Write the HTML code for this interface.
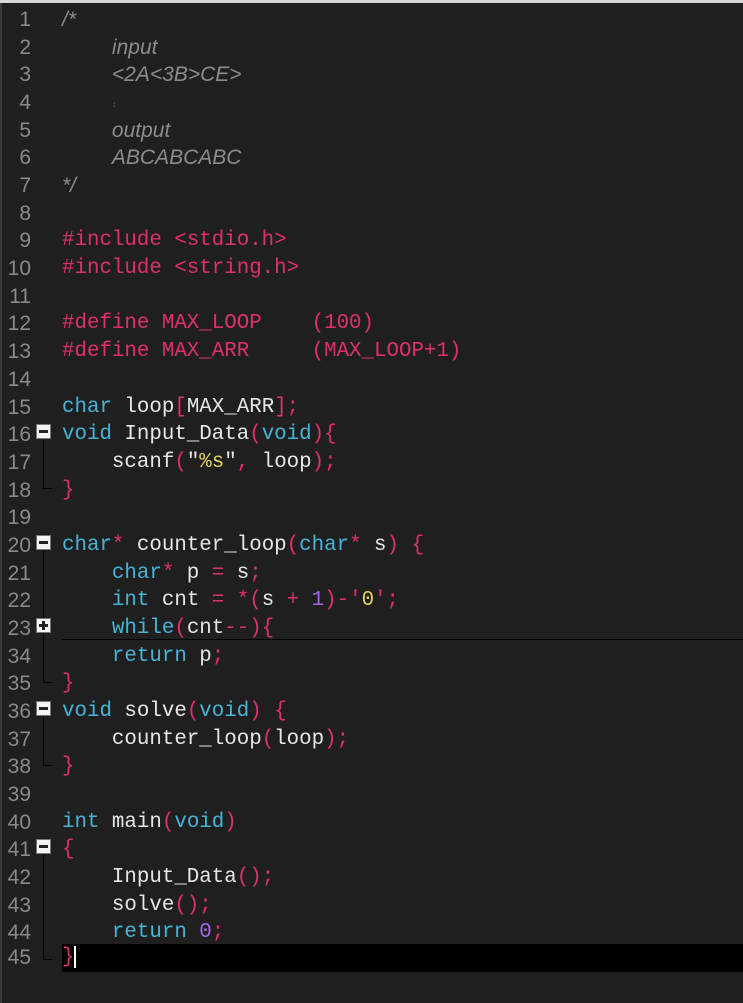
<!DOCTYPE html>
<html><head><meta charset="utf-8"><style>
html,body{margin:0;padding:0;}
body{width:743px;height:1003px;background:#1f1f1f;position:relative;overflow:hidden;font-family:"Liberation Mono",monospace;font-size:20.8px;}
.top{position:absolute;left:0;top:0;width:743px;height:3px;background:#d8d8d8;}
.lft{position:absolute;left:0;top:3px;width:2px;height:1000px;background:#3a3a3a;}
.r{position:absolute;left:0;width:743px;height:27.68px;line-height:27.68px;white-space:pre;}
.n,.c{top:3px;}
.n{position:absolute;left:0;width:31px;text-align:right;color:#8a8a8a;font-family:"Liberation Sans",sans-serif;font-size:21px;}
.c{position:absolute;left:62px;color:#e6e6e6;}
.k{color:#45b4d8}.p{color:#e0306a}.m{color:#a066f0}.y{color:#e2d25c}
.cm{color:#8c8c8c;font-family:"Liberation Sans",sans-serif;font-style:italic;font-size:21px;}
.box{position:absolute;left:36px;width:13px;height:13px;background:#f4f4f4;border:1px solid #777;}
.box:before{content:"";position:absolute;left:2px;right:2px;top:5px;height:3px;background:#222;}
.plus:after{content:"";position:absolute;top:2px;bottom:2px;left:5px;width:3px;background:#222;}
.vl{position:absolute;left:43px;width:1px;background:#000;}
.hl{position:absolute;left:43px;width:9px;height:1px;background:#000;}
</style></head><body>
<div class="top"></div><div class="lft"></div>
<div style="position:absolute;left:62px;top:944px;width:681px;height:28px;background:#000"></div>
<div style="position:absolute;left:62px;top:639px;width:681px;height:1px;background:#000"></div>

<div class="r" style="top:3px"><span class="n">1</span><span class="c"><span class="cm">/*</span></span></div>
<div class="r" style="top:30.68px"><span class="n">2</span><span class="c">    <span class="cm">input</span></span></div>
<div class="r" style="top:58.36px"><span class="n">3</span><span class="c">    <span class="cm">&lt;2A&lt;3B&gt;CE&gt;</span></span></div>
<div class="r" style="top:86.04px"><span class="n">4</span><span class="c">    <span class="p" style="font-size:8px">:</span></span></div>
<div class="r" style="top:113.72px"><span class="n">5</span><span class="c">    <span class="cm">output</span></span></div>
<div class="r" style="top:141.4px"><span class="n">6</span><span class="c">    <span class="cm">ABCABCABC</span></span></div>
<div class="r" style="top:169.08px"><span class="n">7</span><span class="c"><span class="cm">*/</span></span></div>
<div class="r" style="top:196.76px"><span class="n">8</span></div>
<div class="r" style="top:224.44px"><span class="n">9</span><span class="c p">#include &lt;stdio.h&gt;</span></div>
<div class="r" style="top:252.12px"><span class="n">10</span><span class="c p">#include &lt;string.h&gt;</span></div>
<div class="r" style="top:279.8px"><span class="n">11</span></div>
<div class="r" style="top:307.48px"><span class="n">12</span><span class="c p">#define MAX_LOOP    (100)</span></div>
<div class="r" style="top:335.16px"><span class="n">13</span><span class="c p">#define MAX_ARR     (MAX_LOOP+1)</span></div>
<div class="r" style="top:362.84px"><span class="n">14</span></div>
<div class="r" style="top:390.52px"><span class="n">15</span><span class="c"><span class="k">char</span> loop<span class="p">[</span>MAX_ARR<span class="p">];</span></span></div>
<div class="r" style="top:418.2px"><span class="n">16</span><span class="c"><span class="k">void</span> Input_Data<span class="p">(</span><span class="k">void</span><span class="p">){</span></span></div>
<div class="r" style="top:445.88px"><span class="n">17</span><span class="c">    scanf<span class="p">(</span>"<span class="y">%s</span>"<span class="p">,</span> loop<span class="p">);</span></span></div>
<div class="r" style="top:473.56px"><span class="n">18</span><span class="c p">}</span></div>
<div class="r" style="top:501.24px"><span class="n">19</span></div>
<div class="r" style="top:528.92px"><span class="n">20</span><span class="c"><span class="k">char</span><span class="p">*</span> counter_loop<span class="p">(</span><span class="k">char</span><span class="p">*</span> s<span class="p">)</span> <span class="p">{</span></span></div>
<div class="r" style="top:556.6px"><span class="n">21</span><span class="c">    <span class="k">char</span><span class="p">*</span> p <span class="p">=</span> s<span class="p">;</span></span></div>
<div class="r" style="top:584.28px"><span class="n">22</span><span class="c">    <span class="k">int</span> cnt <span class="p">=</span> <span class="p">*(</span>s <span class="p">+</span> <span class="m">1</span><span class="p">)-</span><span class="p">'</span><span class="y">0</span><span class="p">';</span></span></div>
<div class="r" style="top:611.96px"><span class="n">23</span><span class="c">    <span class="k">while</span><span class="p">(</span>cnt<span class="p">--){</span></span></div>
<div class="r" style="top:639.64px"><span class="n">34</span><span class="c">    <span class="k">return</span> p<span class="p">;</span></span></div>
<div class="r" style="top:667.32px"><span class="n">35</span><span class="c p">}</span></div>
<div class="r" style="top:695px"><span class="n">36</span><span class="c"><span class="k">void</span> solve<span class="p">(</span><span class="k">void</span><span class="p">)</span> <span class="p">{</span></span></div>
<div class="r" style="top:722.68px"><span class="n">37</span><span class="c">    counter_loop<span class="p">(</span>loop<span class="p">);</span></span></div>
<div class="r" style="top:750.36px"><span class="n">38</span><span class="c p">}</span></div>
<div class="r" style="top:778.04px"><span class="n">39</span></div>
<div class="r" style="top:805.72px"><span class="n">40</span><span class="c"><span class="k">int</span> main<span class="p">(</span><span class="k">void</span><span class="p">)</span></span></div>
<div class="r" style="top:833.4px"><span class="n">41</span><span class="c p">{</span></div>
<div class="r" style="top:861.08px"><span class="n">42</span><span class="c">    Input_Data<span class="p">();</span></span></div>
<div class="r" style="top:888.76px"><span class="n">43</span><span class="c">    solve<span class="p">();</span></span></div>
<div class="r" style="top:916.44px"><span class="n">44</span><span class="c">    <span class="k">return</span> <span class="m">0</span><span class="p">;</span></span></div>
<div class="r" style="top:941.12px"><span class="n">45</span><span class="c"><span class="p">}</span><span style="display:inline-block;width:2px;height:22px;background:#fff;vertical-align:middle"></span></span></div>

<div class="vl" style="top:440px;height:48px"></div><div class="hl" style="top:488px"></div>
<div class="box" style="top:424px"></div>
<div class="vl" style="top:551px;height:131px"></div><div class="hl" style="top:682px"></div>
<div class="box" style="top:535px"></div>
<div class="box plus" style="top:618px"></div>
<div class="vl" style="top:717px;height:48px"></div><div class="hl" style="top:765px"></div>
<div class="box" style="top:701px"></div>
<div class="vl" style="top:855px;height:104px"></div><div class="hl" style="top:959px"></div>
<div class="box" style="top:839px"></div>
</body></html>
